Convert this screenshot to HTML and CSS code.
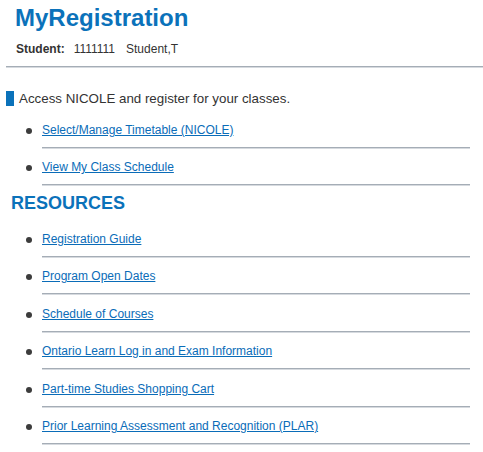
FILE: index.html
```html
<!DOCTYPE html>
<html>
<head>
<meta charset="utf-8">
<link rel="stylesheet" href="styles.css">
</head>
<body>
<header class="page-head">
  <h1 class="title">MyRegistration</h1>
  <div class="student"><span class="label">Student:</span><span class="sid">1111111</span><span class="sname">Student,T</span></div>
</header>
<main class="content">
  <div class="intro"><span class="bar"></span><span class="intro-text">Access NICOLE and register for your classes.</span></div>
  <ul class="links">
    <li class="item"><span class="dot"></span><div class="entry"><a href="#">Select/Manage Timetable (NICOLE)</a></div></li>
    <li class="item"><span class="dot"></span><div class="entry"><a href="#">View My Class Schedule</a></div></li>
  </ul>
  <h2 class="section">RESOURCES</h2>
  <ul class="links resources">
    <li class="item"><span class="dot"></span><div class="entry"><a href="#">Registration Guide</a></div></li>
    <li class="item"><span class="dot"></span><div class="entry"><a href="#">Program Open Dates</a></div></li>
    <li class="item"><span class="dot"></span><div class="entry"><a href="#">Schedule of Courses</a></div></li>
    <li class="item"><span class="dot"></span><div class="entry"><a href="#">Ontario Learn Log in and Exam Information</a></div></li>
    <li class="item"><span class="dot"></span><div class="entry"><a href="#">Part-time Studies Shopping Cart</a></div></li>
    <li class="item"><span class="dot"></span><div class="entry"><a href="#">Prior Learning Assessment and Recognition (PLAR)</a></div></li>
  </ul>
</main>
</body>
</html>
```

FILE: styles.css
```css
html, body {
  margin: 0;
  padding: 0;
  background: #ffffff;
}
body {
  font-family: "Liberation Sans", Arial, sans-serif;
  color: #333333;
  width: 483px;
}
.page-head {
  margin-left: 6px;
  padding-top: 4px;
  padding-bottom: 9px;
  border-bottom: 1px solid #a5adb6;
  box-shadow: 0 1px 0 #d6dadf;
}
.title {
  margin: 0 0 0 9px;
  font-size: 24px;
  line-height: 28px;
  font-weight: bold;
  color: #0b72ba;
}
.student {
  margin: 9px 0 0 10px;
  font-size: 12px;
  line-height: 16px;
  color: #333333;
  display: flex;
}
.label {
  font-weight: bold;
  margin-right: 9px;
}
.sid {
  margin-right: 11px;
}
.content {
  padding-top: 24px;
}
.intro {
  display: flex;
  align-items: stretch;
  margin-left: 6px;
  height: 15px;
}
.bar {
  width: 8px;
  background: #0b72ba;
  margin-right: 5px;
}
.intro-text {
  font-size: 13.33px;
  line-height: 15px;
  color: #333333;
}
.links {
  list-style: none;
  margin: 6px 0 0 0;
  padding: 0;
}
.item {
  display: flex;
  padding-left: 26px;
  padding-top: 10px;
}
.resources .item {
  padding-top: 10.5px;
}
.dot {
  width: 6px;
  height: 6px;
  border-radius: 50%;
  background: #3c3c3c;
  margin-top: 6px;
  margin-right: 10px;
  flex: none;
}
.entry {
  flex: 1;
  margin-right: 13px;
  padding-bottom: 9px;
  border-bottom: 1px solid #a5adb6;
  box-shadow: 0 1px 0 #d6dadf;
  margin-bottom: 1px;
  font-size: 12px;
  line-height: 16px;
}
.entry a {
  color: #0a6cb8;
  text-decoration: underline;
}
.section {
  margin: 6px 0 0 11px;
  font-size: 18px;
  line-height: 22px;
  font-weight: bold;
  color: #0b72ba;
}
```
